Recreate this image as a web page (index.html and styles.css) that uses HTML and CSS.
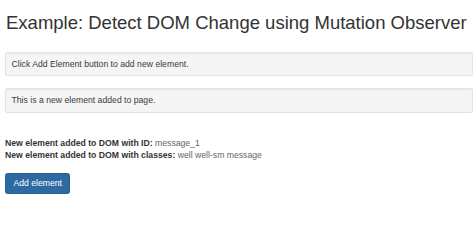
FILE: index.html
```html
<!DOCTYPE html>
<html>
<head>
<meta charset="utf-8">
<link rel="stylesheet" href="styles.css">
</head>
<body>
<div class="container">
  <h1 class="title">Example: Detect DOM Change using Mutation Observer</h1>
  <div class="well">Click Add Element button to add new element.</div>
  <div class="well">This is a new element added to page.</div>
  <div class="info">
    <div><b>New element added to DOM with ID:</b> <span class="val">message_1</span></div>
    <div><b>New element added to DOM with classes:</b> <span class="val">well well-sm message</span></div>
  </div>
  <button class="btn">Add element</button>
</div>
</body>
</html>
```

FILE: styles.css
```css
html, body {
  margin: 0;
  padding: 0;
  background: #ffffff;
}
body {
  font-family: "Liberation Sans", Arial, sans-serif;
  font-size: 8.66px;
  line-height: 12.4px;
  color: #333333;
}
.container {
  padding: 12.6px 1px 0 4.5px;
}
.title {
  margin: 0 0 19.4px 1.5px;
  font-size: 18.5px;
  line-height: 20px;
  font-weight: 400;
  color: #333333;
  white-space: nowrap;
}
.well {
  background: #f5f5f5;
  border: 1px solid #e3e3e3;
  border-radius: 2px;
  box-shadow: inset 0 1px 1px rgba(0,0,0,0.05);
  padding: 5px 6px;
  margin-bottom: 12px;
  color: #3a3a3a;
}
.info {
  margin-top: 24px;
  margin-left: 0.5px;
}
.info b {
  font-weight: 700;
  color: #333333;
}
.val {
  color: #666666;
}
.btn {
  display: block;
  margin-top: 11px;
  margin-left: 0.5px;
  font-family: "Liberation Sans", Arial, sans-serif;
  font-size: 8.66px;
  line-height: 12.4px;
  white-space: nowrap;
  color: #ffffff;
  background: #2c6aa1;
  border: 1px solid #285e8e;
  border-radius: 2.5px;
  padding: 3.3px 7.4px;
  cursor: pointer;
}
```
